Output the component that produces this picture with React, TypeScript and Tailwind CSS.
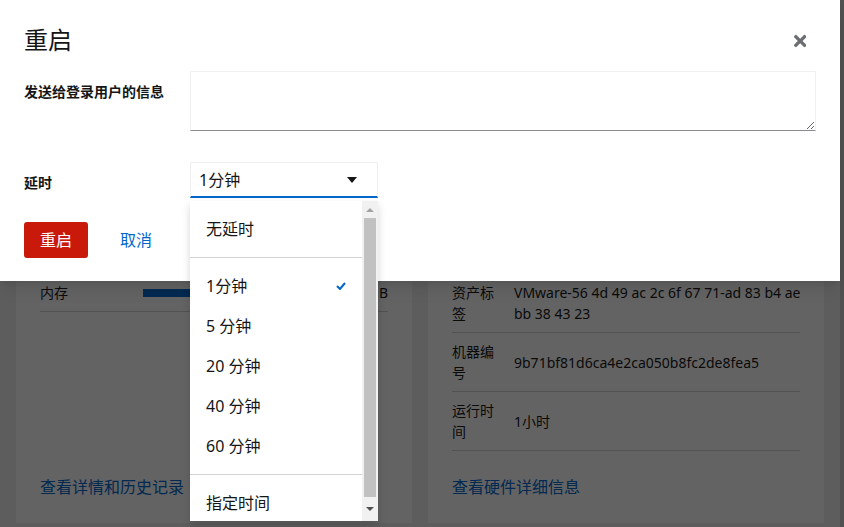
import { useState } from "react"

const options = ["1分钟", "5 分钟", "20 分钟", "40 分钟", "60 分钟"]

function CloseIcon() {
   return (
      <svg viewBox="0 0 352 512" className="h-[18px] w-[12.4px]" fill="currentColor">
         <path d="M242.72 256l100.07-100.07c12.28-12.28 12.28-32.19 0-44.48l-22.24-22.24c-12.28-12.28-32.19-12.28-44.48 0L176 189.28 75.93 89.21c-12.28-12.28-32.19-12.28-44.48 0L9.21 111.45c-12.28 12.28-12.28 32.19 0 44.48L109.28 256 9.21 356.07c-12.28 12.28-12.28 32.19 0 44.48l22.24 22.24c12.28 12.28 32.2 12.28 44.48 0L176 322.72l100.07 100.07c12.28 12.28 32.2 12.28 44.48 0l22.24-22.24c12.28-12.28 12.28-32.19 0-44.48L242.72 256z" />
      </svg>
   )
}

function Row({ label, children }: { label: string; children: React.ReactNode }) {
   return (
      <div className="grid grid-cols-[48px_1fr] items-center gap-x-[14px] border-b border-[#d2d2d2] py-2 text-sm leading-[21px]">
         <div>{label}</div>
         <div>{children}</div>
      </div>
   )
}

function UsageRow({ label, pct, value }: { label: string; pct: string; value: string }) {
   return (
      <div className="grid grid-cols-[103px_1fr_auto] items-center border-b border-[#d2d2d2] py-2 text-sm leading-[21px]">
         <div>{label}</div>
         <div className="h-2 bg-[#f0f0f0]">
            <div className="h-2 bg-[#06c]" style={{ width: pct }} />
         </div>
         <div className="ml-3">{value}</div>
      </div>
   )
}

export default function App() {
   const [selected] = useState("1分钟")

   return (
      <div className="relative h-[527px] w-[844px] overflow-hidden bg-[#f0f0f0] font-['Noto_Sans','Noto_Sans_CJK_SC',sans-serif] text-[#151515]">
         {/* page behind the dialog */}
         <div className="flex h-full">
            <div className="flex flex-1 gap-4 px-4 pb-1 pt-[169px]">
               <div className="flex w-[396px] flex-col bg-white p-6">
                  <div className="mb-4 text-lg leading-[27px]">使用率</div>
                  <UsageRow label="CPU" pct="8%" value="1%" />
                  <UsageRow label="内存" pct="55%" value="0.9 / 1.8 GiB" />
                  <div className="flex-1" />
                  <a className="text-base leading-6 text-[#06c]">查看详情和历史记录</a>
               </div>
               <div className="flex w-[396px] flex-col bg-white p-6">
                  <div className="mb-4 text-lg leading-[27px]">系统信息</div>
                  <Row label="型号">VMware Virtual Platform</Row>
                  <Row label="资产标签">
                     <span className="whitespace-nowrap">VMware-56 4d 49 ac 2c 6f 67 71-ad 83 b4 ae</span>
                     <br />
                     bb 38 43 23
                  </Row>
                  <Row label="机器编号">9b71bf81d6ca4e2ca050b8fc2de8fea5</Row>
                  <Row label="运行时间">1小时</Row>
                  <div className="flex-1" />
                  <a className="text-base leading-6 text-[#06c]">查看硬件详细信息</a>
               </div>
            </div>
            <div className="w-1 bg-[#cfcfcf]" />
         </div>

         {/* backdrop */}
         <div className="absolute inset-0 bg-[rgba(3,3,3,0.62)]" />

         {/* dialog */}
         <div className="absolute left-0 top-0 w-[840px] bg-white px-6 pb-[23px] pt-6 shadow-lg">
            <div className="flex items-start justify-between">
               <h1 className="text-2xl leading-[31px]">重启</h1>
               <button className="mr-[10px] mt-2 text-[#6a6e73]">
                  <CloseIcon />
               </button>
            </div>

            <div className="mt-4 grid grid-cols-[166px_1fr] gap-y-[31px]">
               <label className="pt-[10px] text-sm font-bold leading-[21px]">发送给登录用户的信息</label>
               <textarea className="h-[60px] w-full border border-[#f0f0f0] border-b-[#8a8d90] px-2 py-1 text-sm outline-none" />
               <label className="pt-[10px] text-sm font-bold leading-[21px]">延时</label>
               <div className="flex h-9 w-[188px] items-center justify-between border border-b-2 border-[#f0f0f0] border-b-[#06c] pl-2 pr-5 text-base">
                  <span>{selected}</span>
                  <svg viewBox="0 0 10 6" className="h-[6px] w-[10px]" fill="#151515">
                     <polygon points="0,0 10,0 5,6" />
                  </svg>
               </div>
            </div>

            <div className="mt-6 flex items-center gap-4">
               <button className="h-9 rounded-[3px] bg-[#c9190b] px-4 text-base text-white">重启</button>
               <button className="h-9 px-4 text-base text-[#06c]">取消</button>
            </div>
         </div>

         {/* open select menu */}
         <div className="absolute left-[190px] top-[201px] flex h-[320px] w-[188px] bg-white shadow-[0_4px_8px_rgba(3,3,3,0.16)]">
            <div className="flex-1 overflow-hidden py-2 text-base leading-6">
               <div className="flex h-10 items-center px-4">无延时</div>
               <div className="my-2 h-px bg-[#d2d2d2]" />
               {options.map(o => (
                  <div key={o} className="flex h-10 items-center justify-between px-4">
                     <span>{o}</span>
                     {o === selected ? (
                        <svg viewBox="0 0 10 8" className="h-2 w-[10px]" fill="none" stroke="#06c" strokeWidth="2">
                           <polyline points="1,4 4,7 9,1" />
                        </svg>
                     ) : null}
                  </div>
               ))}
               <div className="my-2 h-px bg-[#d2d2d2]" />
               <div className="flex h-10 items-center px-4">指定时间</div>
            </div>
            <div className="flex w-4 flex-col bg-[#f1f1f1]">
               <div className="flex h-[17px] items-center justify-center">
                  <svg viewBox="0 0 8 4" className="h-1 w-2" fill="#a3a3a3">
                     <polygon points="0,4 8,4 4,0" />
                  </svg>
               </div>
               <div className="mx-0.5 h-[279px] bg-[#c1c1c1]" />
               <div className="flex flex-1 items-center justify-center">
                  <svg viewBox="0 0 8 4" className="h-1 w-2" fill="#505050">
                     <polygon points="0,0 8,0 4,4" />
                  </svg>
               </div>
            </div>
         </div>
      </div>
   )
}
